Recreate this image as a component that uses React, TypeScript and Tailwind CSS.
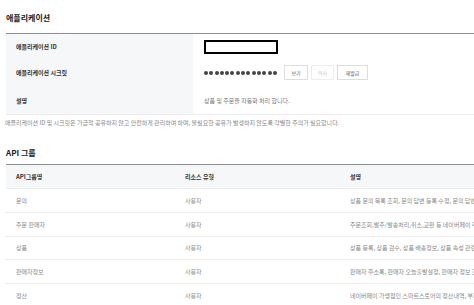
import React from "react";

const apiRows = [
  ["문의", "사용자", "상품 문의 목록 조회, 문의 답변 등록 수정, 문의 답변 삭제 등 상품 문의 관련 기능을 제공합니다."],
  ["주문 판매자", "사용자", "주문조회,발주/발송처리,취소,교환 등 네이버페이 주문 관련 기능을 제공합니다."],
  ["상품", "사용자", "상품 등록, 상품 검수, 상품 배송정보, 상품 속성 관련 기능을 제공합니다."],
  ["판매자정보", "사용자", "판매자 주소록, 판매자 오늘출발설정, 판매자 정보 조회 기능을 제공합니다."],
  ["정산", "사용자", "네이버페이 가맹점인 스마트스토어의 정산내역, 부가세 내역 조회 기능을 제공합니다."],
];

export default function App() {
  return (
    <div className="w-[474px] h-[305px] overflow-hidden bg-white font-['Noto_Sans_CJK_KR','Noto_Sans',sans-serif] text-[#333]">
      <div className="w-[620px] pl-[6px]">
        <h2 className="pt-[12px] h-[33px] text-[8px] leading-[12px] font-bold text-[#222]">애플리케이션</h2>
        <div className="border-t border-[#8c8c8c] border-b border-b-[#ececec]">
          <div className="flex h-[25px]">
            <div className="w-[187px] bg-[#f6f7f9] pl-[10px] flex items-center text-[6px] font-bold text-[#333]">애플리케이션 ID</div>
            <div className="flex-1 pl-[11px] flex items-center">
              <div className="w-[74px] h-[14px] border-2 border-black bg-white" />
            </div>
          </div>
          <div className="flex h-[27px]">
            <div className="w-[187px] bg-[#f6f7f9] pl-[10px] flex items-center text-[6px] font-bold text-[#333]">애플리케이션 시크릿</div>
            <div className="flex-1 pl-[11px] flex items-center">
              <div className="flex gap-[1.3px] w-[80px]">
                {Array.from({ length: 14 }).map((_, i) => (
                  <span key={i} className="w-[4px] h-[4px] rounded-full bg-[#444] inline-block" />
                ))}
              </div>
              <div className="flex gap-[3px]">
                <button className="w-[24px] h-[15px] border border-[#dedede] bg-white text-[5px] text-[#555] flex items-center justify-center">보기</button>
                <button className="w-[23px] h-[15px] border border-[#eeeeee] bg-white text-[5px] text-[#c4c4c4] flex items-center justify-center">복사</button>
                <button className="w-[31px] h-[15px] border border-[#dedede] bg-white text-[5px] text-[#555] flex items-center justify-center">재발급</button>
              </div>
            </div>
          </div>
          <div className="flex h-[28px]">
            <div className="w-[187px] bg-[#f6f7f9] pl-[10px] flex items-center text-[6px] font-bold text-[#333]">설명</div>
            <div className="flex-1 pl-[11px] flex items-center text-[6px] text-[#777]">상품 및 주문을 자동화 처리 합니다.</div>
          </div>
        </div>
        <p className="h-[14px] flex items-center text-[6px] text-[#888] -ml-[1px]">애플리케이션 ID 및 시크릿은 가급적 공유하지 않고 안전하게 관리하여 하며, 불필요한 공유가 발생하지 않도록 각별한 주의가 필요합니다.</p>
        <h2 className="mt-[18px] h-[17px] text-[8px] leading-[12px] font-bold text-[#222]">API 그룹</h2>
        <div className="border-t border-[#8c8c8c]">
          <div className="flex h-[24px] bg-[#f6f7f9] border-b border-[#ececec] text-[6px] font-bold text-[#333]">
            <div className="w-[169px] pl-[10px] flex items-center">API그룹명</div>
            <div className="w-[165px] pl-[10px] flex items-center">리소스 유형</div>
            <div className="flex-1 pl-[10px] flex items-center">설명</div>
          </div>
          {apiRows.map(([a, b, c]) => (
            <div key={a} className="flex h-[23.75px] border-b border-[#ececec] text-[6px] text-[#888]">
              <div className="w-[169px] pl-[10px] flex items-center">{a}</div>
              <div className="w-[165px] pl-[10px] flex items-center">{b}</div>
              <div className="flex-1 pl-[10px] flex items-center whitespace-nowrap">{c}</div>
            </div>
          ))}
        </div>
      </div>
    </div>
  );
}
